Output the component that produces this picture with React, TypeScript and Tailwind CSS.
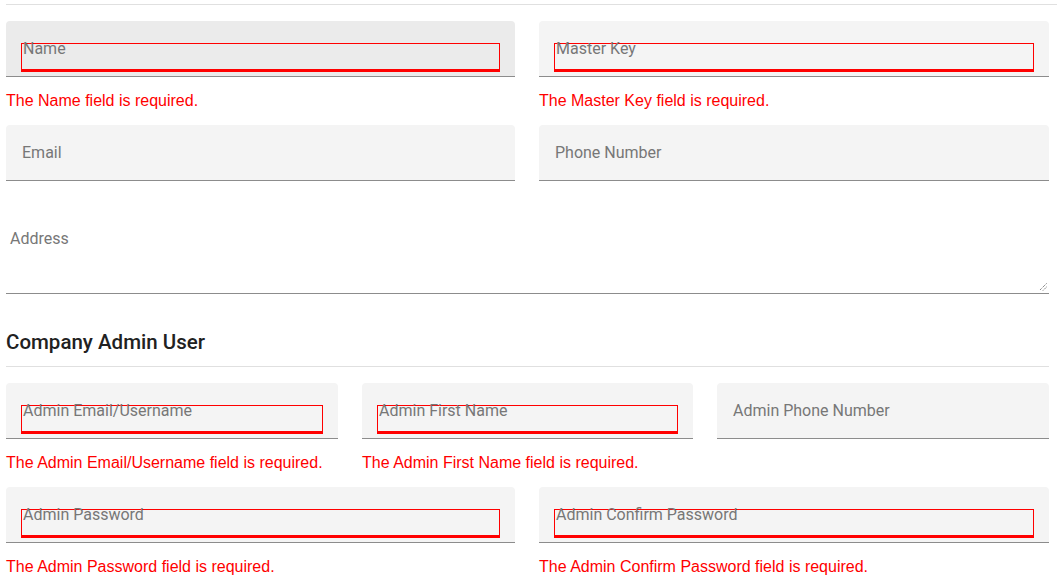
import React from "react";

const labelFont = { fontFamily: "Roboto, 'Liberation Sans', sans-serif" };

function ErrorField({ label, error, hover = false }: { label: string; error: string; hover?: boolean }) {
  const bg = hover ? "bg-[#ebebeb]" : "bg-[#f4f4f4]";
  return (
    <div className="flex flex-col">
      <div className={`h-[56px] rounded-t-[4px] border-b border-[#8c8c8c] px-[15px] pt-[22px] ${bg}`}>
        <div className="h-[29px] bg-[#ff0000] px-px pt-px pb-[3px]">
          <div className={`h-full pl-px ${bg}`}>
            <span className="block text-[16px] leading-[9px] text-[#777777]" style={labelFont}>
              {label}
            </span>
          </div>
        </div>
      </div>
      <div className="h-[48px] pt-[13px]">
        <span
          className="block text-[16px] leading-[22px] text-[#ff0000] whitespace-nowrap"
          style={{ fontFamily: "'Liberation Sans', Arial, sans-serif" }}
        >
          {error}
        </span>
      </div>
    </div>
  );
}

function PlainField({ label }: { label: string }) {
  return (
    <div className="flex flex-col">
      <div className="flex h-[56px] items-center rounded-t-[4px] border-b border-[#8c8c8c] bg-[#f4f4f4] px-[16px]">
        <span className="text-[16px] leading-[20px] text-[#777777]" style={labelFont}>
          {label}
        </span>
      </div>
    </div>
  );
}

export default function App() {
  return (
    <div className="min-h-[581px] w-full bg-white pl-[6px] pt-[4px]">
      <div className="h-px bg-[#e0e0e0]" />
      <div className="w-[1043px]">
        <div className="mt-[16px] grid grid-cols-[509px_510px] gap-x-6">
          <ErrorField label="Name" error="The Name field is required." hover />
          <ErrorField label="Master Key" error="The Master Key field is required." />
        </div>
        <div className="grid grid-cols-[509px_510px] gap-x-6">
          <PlainField label="Email" />
          <PlainField label="Phone Number" />
        </div>
        <div className="relative mt-[24px] h-[89px] border-b border-[#8c8c8c] px-[4px] pt-[25px]">
          <span className="block text-[16px] leading-[18px] text-[#777777]" style={labelFont}>
            Address
          </span>
          <svg className="absolute bottom-[2px] right-[2px]" width="9" height="9" viewBox="0 0 9 9">
            <path
              d="M8.5 1.5 L1.5 8.5 M8.5 5 L5 8.5"
              stroke="#555"
              strokeWidth="1"
              strokeDasharray="1 1"
              fill="none"
            />
          </svg>
        </div>
        <h2 className="mt-[36px] text-[20.5px] leading-[24px] font-medium text-[#212121]" style={labelFont}>
          Company Admin User
        </h2>
        <div className="mt-[12px] h-px bg-[#e0e0e0]" />
        <div className="mt-[16px] grid grid-cols-[332px_331px_332px] gap-x-6">
          <ErrorField label="Admin Email/Username" error="The Admin Email/Username field is required." />
          <ErrorField label="Admin First Name" error="The Admin First Name field is required." />
          <PlainField label="Admin Phone Number" />
        </div>
        <div className="grid grid-cols-[509px_510px] gap-x-6">
          <ErrorField label="Admin Password" error="The Admin Password field is required." />
          <ErrorField label="Admin Confirm Password" error="The Admin Confirm Password field is required." />
        </div>
      </div>
    </div>
  );
}
